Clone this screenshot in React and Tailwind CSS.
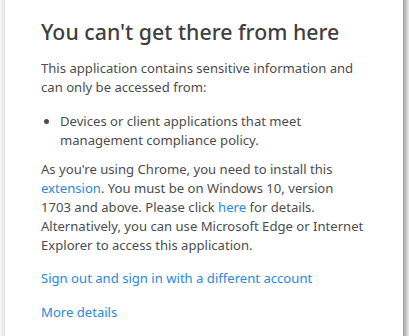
export default function App() {
  const link = "text-[#2b88d8]";
  return (
    <div className="flex w-[409px] h-[336px] overflow-hidden bg-white" style={{ fontFamily: '"Noto Sans", "Open Sans", sans-serif' }}>
      <div className="w-[5px] h-full bg-gradient-to-r from-[#f7f7f7] to-[#e4e4e4]" />
      <div className="flex-1 h-full bg-white pl-[36px] pr-[10px] pt-[16px] text-[13.1px] leading-[19px] text-[#4d4d4d] whitespace-nowrap">
        <h1 className="text-[21.3px] leading-[32px] font-medium text-[#3f3f3f]">You can't get there from here</h1>
        <p className="mt-[11px]">This application contains sensitive information and<br />can only be accessed from:</p>
        <ul className="mt-[15px] pl-[19px] list-disc">
          <li>Devices or client applications that meet<br />management compliance policy.</li>
        </ul>
        <p className="mt-[10px]">
          As you're using Chrome, you need to install this<br />
          <span className={link}>extension</span>. You must be on Windows 10, version<br />
          1703 and above. Please click <span className={link}>here</span> for details.<br />
          Alternatively, you can use Microsoft Edge or Internet<br />
          Explorer to access this application.
        </p>
        <p className={`mt-[14px] ${link}`}>Sign out and sign in with a different account</p>
        <p className={`mt-[15px] ${link}`}>More details</p>
      </div>
      <div className="w-[6px] h-full bg-gradient-to-r from-[#a0a0a0] to-[#ececec]" />
    </div>
  );
}
